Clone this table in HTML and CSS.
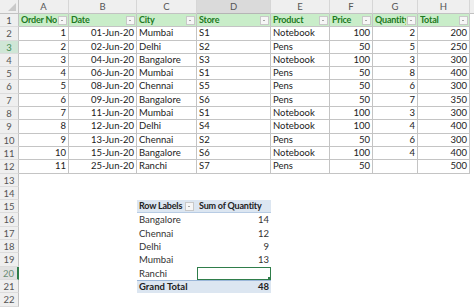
FILE: index.html
```html
<!DOCTYPE html>
<html>
<head>
<meta charset="utf-8">
<link rel="stylesheet" href="styles.css">
</head>
<body>
<div class="sheet">
  <div class="ch corner"><span class="tri"></span></div>
  <div class="ch">A</div><div class="ch">B</div><div class="ch">C</div><div class="ch sel">D</div><div class="ch">E</div><div class="ch">F</div><div class="ch">G</div><div class="ch">H</div><div class="ch last"></div>

  <div class="rh">1</div>
  <div class="h"><span class="t">Order No</span><span class="dd"></span></div>
  <div class="h"><span class="t">Date</span><span class="dd"></span></div>
  <div class="h"><span class="t">City</span><span class="dd"></span></div>
  <div class="h"><span class="t">Store</span><span class="dd"></span></div>
  <div class="h"><span class="t">Product</span><span class="dd"></span></div>
  <div class="h"><span class="t">Price</span><span class="dd"></span></div>
  <div class="h"><span class="t">Quantity</span><span class="dd"></span></div>
  <div class="h"><span class="t">Total</span><span class="dd"></span></div>
  <div class="e"></div>

  <div class="rh">2</div><div class="c r">1</div><div class="c r">01-Jun-20</div><div class="c">Mumbai</div><div class="c">S1</div><div class="c">Notebook</div><div class="c r">100</div><div class="c r">2</div><div class="c r">200</div><div class="e"></div>
  <div class="rh hl">3</div><div class="c r">2</div><div class="c r">02-Jun-20</div><div class="c">Delhi</div><div class="c">S2</div><div class="c">Pens</div><div class="c r">50</div><div class="c r">5</div><div class="c r">250</div><div class="e"></div>
  <div class="rh">4</div><div class="c r">3</div><div class="c r">04-Jun-20</div><div class="c">Bangalore</div><div class="c">S3</div><div class="c">Notebook</div><div class="c r">100</div><div class="c r">3</div><div class="c r">300</div><div class="e"></div>
  <div class="rh">5</div><div class="c r">4</div><div class="c r">06-Jun-20</div><div class="c">Mumbai</div><div class="c">S1</div><div class="c">Pens</div><div class="c r">50</div><div class="c r">8</div><div class="c r">400</div><div class="e"></div>
  <div class="rh">6</div><div class="c r">5</div><div class="c r">08-Jun-20</div><div class="c">Chennai</div><div class="c">S5</div><div class="c">Pens</div><div class="c r">50</div><div class="c r">6</div><div class="c r">300</div><div class="e"></div>
  <div class="rh">7</div><div class="c r">6</div><div class="c r">09-Jun-20</div><div class="c">Bangalore</div><div class="c">S6</div><div class="c">Pens</div><div class="c r">50</div><div class="c r">7</div><div class="c r">350</div><div class="e"></div>
  <div class="rh">8</div><div class="c r">7</div><div class="c r">11-Jun-20</div><div class="c">Mumbai</div><div class="c">S1</div><div class="c">Notebook</div><div class="c r">100</div><div class="c r">3</div><div class="c r">300</div><div class="e"></div>
  <div class="rh">9</div><div class="c r">8</div><div class="c r">12-Jun-20</div><div class="c">Delhi</div><div class="c">S4</div><div class="c">Notebook</div><div class="c r">100</div><div class="c r">4</div><div class="c r">400</div><div class="e"></div>
  <div class="rh">10</div><div class="c r">9</div><div class="c r">13-Jun-20</div><div class="c">Chennai</div><div class="c">S2</div><div class="c">Pens</div><div class="c r">50</div><div class="c r">6</div><div class="c r">300</div><div class="e"></div>
  <div class="rh">11</div><div class="c r">10</div><div class="c r">15-Jun-20</div><div class="c">Bangalore</div><div class="c">S6</div><div class="c">Notebook</div><div class="c r">100</div><div class="c r">4</div><div class="c r">400</div><div class="e"></div>
  <div class="rh">12</div><div class="c r">11</div><div class="c r">25-Jun-20</div><div class="c">Ranchi</div><div class="c">S7</div><div class="c">Pens</div><div class="c r">50</div><div class="c r"></div><div class="c r">500</div><div class="e"></div>

  <div class="rh">13</div><div class="e full"></div>
  <div class="rh">14</div><div class="e full"></div>

  <div class="rh">15</div><div class="e span2"></div>
  <div class="p ph"><span class="t">Row Labels</span><span class="dd"></span></div>
  <div class="p ph"><span class="t">Sum of Quantity</span></div>
  <div class="e span5"></div>

  <div class="rh">16</div><div class="e span2"></div><div class="p">Bangalore</div><div class="p r">14</div><div class="e span5"></div>
  <div class="rh">17</div><div class="e span2"></div><div class="p">Chennai</div><div class="p r">12</div><div class="e span5"></div>
  <div class="rh">18</div><div class="e span2"></div><div class="p">Delhi</div><div class="p r">9</div><div class="e span5"></div>
  <div class="rh">19</div><div class="e span2"></div><div class="p">Mumbai</div><div class="p r">13</div><div class="e span5"></div>
  <div class="rh sel">20</div><div class="e span2"></div><div class="p">Ranchi</div><div class="p r active"><span class="handle"></span></div><div class="e span5"></div>
  <div class="rh">21</div><div class="e span2"></div><div class="p pt">Grand Total</div><div class="p pt r">48</div><div class="e span5"></div>
  <div class="rh">22</div><div class="e full"></div>
</div>
</body>
</html>
```

FILE: styles.css
```css
html, body {
  margin: 0;
  padding: 0;
  background: #ffffff;
}

.sheet {
  display: grid;
  grid-template-columns: 19px 50px 68px 60px 74px 59px 43px 45px 52px 1fr;
  grid-template-rows: 14px repeat(22, 13.3px);
  width: 474px;
  height: 307px;
  overflow: hidden;
  font-family: Lato, "Liberation Sans", sans-serif;
  font-size: 9.5px;
  color: #222222;
}

.sheet > div {
  box-sizing: border-box;
  overflow: hidden;
  white-space: nowrap;
  line-height: 12px;
}

.ch {
  background: #efefef;
  border-right: 1px solid #d6d6d6;
  border-bottom: 1px solid #c2c2c2;
  color: #555555;
  text-align: center;
  line-height: 13px !important;
}

.ch.sel {
  background: #dadada;
  color: #555555;
  border-bottom: 1px solid #b5b5b5;
}

.ch.last {
  border-right: none;
}

.corner {
  position: relative;
  border-right: 1px solid #c2c2c2;
}

.tri {
  position: absolute;
  right: 2px;
  bottom: 2px;
  width: 0;
  height: 0;
  border-left: 8px solid transparent;
  border-bottom: 8px solid #c9c9c9;
}

.rh {
  background: #efefef;
  border-right: 1px solid #c2c2c2;
  border-bottom: 1px solid #dcdcdc;
  color: #555555;
  text-align: center;
  line-height: 13px !important;
}

.rh.hl {
  background: #cfe6d6;
  color: #3e8a55;
}

.rh.sel {
  background: #e2e2e2;
  color: #6a8d74;
  border-right: 2px solid #2f7d4a;
}

.e {
  background: #ffffff;
}

.full {
  grid-column: span 9;
}

.span2 {
  grid-column: span 2;
}

.span5 {
  grid-column: span 5;
}

.h {
  display: flex;
  align-items: center;
  background: #c9edc9;
  border-right: 1px solid #c4c4c4;
  border-bottom: 1px solid #c4c4c4;
  color: #1d7a22;
  font-weight: bold;
  font-size: 9px;
  letter-spacing: -0.2px;
  padding: 0 1px 0 2px;
}

.t {
  flex: 1 1 auto;
  min-width: 0;
  overflow: hidden;
}

.dd {
  flex: 0 0 auto;
  position: relative;
  width: 7px;
  height: 7px;
  margin-left: 1px;
  border: 1px solid #c8c8c8;
  background: #f6f6f6;
}

.dd::after {
  content: "";
  position: absolute;
  left: 2px;
  top: 3px;
  width: 0;
  height: 0;
  border-left: 1.5px solid transparent;
  border-right: 1.5px solid transparent;
  border-top: 1.5px solid #555555;
}

.c {
  background: #ffffff;
  border-right: 1px solid #c4c4c4;
  border-bottom: 1px solid #c4c4c4;
  padding: 0 2px;
  line-height: 12.3px !important;
}

.r {
  text-align: right;
}

.p {
  background: #ffffff;
  padding: 0 2px;
  line-height: 13px !important;
  color: #333333;
}

.ph {
  display: flex;
  align-items: center;
  background: #dce6f1;
  border-bottom: 1px solid #b8cce4;
  font-weight: bold;
  font-size: 9px;
  letter-spacing: -0.2px;
  color: #222222;
  line-height: 12px !important;
}

.ph .dd {
  margin-right: 1px;
}

.pt {
  background: #dce6f1;
  border-top: 1px solid #9bb7d9;
  font-weight: bold;
  color: #222222;
  line-height: 11.5px !important;
}

.active {
  position: relative;
  border: 1.5px solid #2f7d4a;
}

.handle {
  position: absolute;
  right: -2px;
  bottom: -2px;
  width: 3px;
  height: 3px;
  background: #2f7d4a;
  border: 1px solid #ffffff;
}
```
